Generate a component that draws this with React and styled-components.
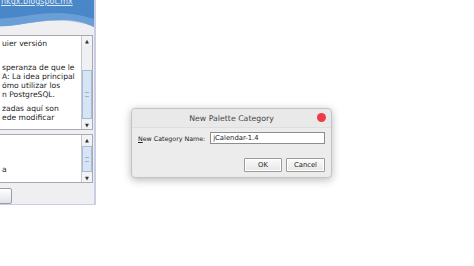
import React from "react";
import styled, { createGlobalStyle } from "styled-components";

const Global = createGlobalStyle`
  html, body { margin: 0; padding: 0; background: #ffffff; }
  body { width: 474px; height: 266px; overflow: hidden; font-family: "DejaVu Sans", sans-serif; }
`;

const Desktop = styled.div`
  position: relative;
  width: 474px;
  height: 266px;
  background: #ffffff;
  overflow: hidden;
`;

const AboutWindow = styled.div`
  position: absolute;
  left: -40px;
  top: -6px;
  width: 133px;
  height: 209px;
  background: #efeff1;
  border: 1px solid #c9cde6;
  border-right: 2px solid #c9cde6;
  display: flex;
  flex-direction: column;
`;

const Header = styled.div`
  height: 43px;
  position: relative;
  background: #efeff1;
  overflow: hidden;
  svg { display: block; }
`;

const Link = styled.span`
  position: absolute;
  left: 40px;
  top: 2px;
  font-size: 8px;
  color: #dfe9f7;
  text-decoration: underline;
  white-space: nowrap;
`;

const Body = styled.div`
  display: flex;
  flex-direction: column;
  gap: 4px;
  padding: 0;
`;

const ScrollBox = styled.div`
  height: ${p => p.h}px;
  display: flex;
  background: #ffffff;
  border: 1px solid #a9a9b0;
  margin-right: 1px;
`;

const TextArea = styled.div`
  flex: 1;
  padding: 3px 0 0 40px;
  font-size: 7.6px;
  line-height: 9px;
  color: #222;
  overflow: hidden;
`;

const Para = styled.div`
  margin-top: ${p => p.gap || 0}px;
  white-space: pre;
`;

const ScrollBar = styled.div`
  width: 10px;
  border-left: 1px solid #c6c8cf;
  background: #eef0f4;
  display: flex;
  flex-direction: column;
`;

const Arrow = styled.div`
  height: 9px;
  display: flex;
  align-items: center;
  justify-content: center;
  font-size: 5px;
  color: #333;
  background: #f2f3f6;
`;

const Track = styled.div`
  flex: 1;
  display: flex;
  flex-direction: column;
  padding-top: ${p => p.offset}px;
  padding-bottom: 1px;
`;

const Thumb = styled.div`
  flex: 1;
  background: #d7e4f4;
  border: 1px solid #a6bbd8;
  display: flex;
  align-items: center;
  justify-content: center;
  &::after {
    content: "";
    width: 4px;
    height: 3px;
    border-top: 1px solid #9fb3cf;
    border-bottom: 1px solid #9fb3cf;
  }
`;

const ButtonRow = styled.div`
  padding: 1px 0 0 0;
`;

const OldButton = styled.div`
  width: 49px;
  height: 14px;
  border: 1px solid #9a9ca4;
  border-radius: 2px;
  background: linear-gradient(#ffffff, #dfe3ea);
`;

const Dialog = styled.div`
  position: absolute;
  left: 131px;
  top: 108px;
  width: 199px;
  height: 68px;
  background: #ececec;
  border: 1px solid #c4c4c4;
  border-radius: 4px;
  box-shadow: 0 2px 8px rgba(0, 0, 0, 0.28);
  display: flex;
  flex-direction: column;
  font-family: "DejaVu Sans", sans-serif;
`;

const TitleBar = styled.div`
  height: 18px;
  position: relative;
  display: flex;
  align-items: center;
  justify-content: center;
  font-size: 7.8px;
  color: #444;
  border-bottom: 1px solid #dedede;
  background: #e9e9e9;
  border-radius: 4px 4px 0 0;
`;

const CloseDot = styled.div`
  position: absolute;
  right: 5px;
  top: 4px;
  width: 9px;
  height: 9px;
  border-radius: 50%;
  background: #ee3c46;
`;

const Content = styled.div`
  flex: 1;
  display: flex;
  flex-direction: column;
  padding: 4px 6px 5px 6px;
`;

const FieldRow = styled.div`
  display: flex;
  align-items: center;
  gap: 5px;
  font-size: 6.3px;
  color: #222;
`;

const Label = styled.span`
  white-space: nowrap;
  u { text-decoration: underline; }
`;

const Input = styled.div`
  flex: 1;
  height: 10px;
  border: 1px solid #8e8e8e;
  background: #fff;
  font-size: 6.8px;
  line-height: 10px;
  padding-left: 2px;
  color: #222;
  white-space: nowrap;
`;

const Actions = styled.div`
  margin-top: auto;
  display: flex;
  justify-content: flex-end;
  gap: 4px;
`;

const Button = styled.button`
  width: ${p => p.w}px;
  height: 14px;
  padding: 0;
  font-family: "DejaVu Sans", sans-serif;
  font-size: 6.8px;
  color: #222;
  background: linear-gradient(#fbfbfb, #e6e6e6);
  border: 1px solid #9b9b9b;
  border-radius: 1px;
  box-shadow: inset 0 0 0 1px #fff;
`;

export default function App() {
  return (
    <Desktop>
      <Global />
      <AboutWindow>
        <Header>
          <svg width="133" height="43" viewBox="0 0 133 43">
            <path d="M0 0 H133 V32 C110 20 80 26 55 30 C35 33 15 31 0 26 Z" fill="#4a87c8" />
            <path d="M0 20 C20 26 45 24 70 20 C95 16 115 18 133 24 V32 C110 22 80 26 55 30 C35 33 15 31 0 26 Z" fill="#7eaee0" opacity="0.6" />
          </svg>
          <Link>nkgx.blogspot.mx</Link>
        </Header>
        <Body>
          <ScrollBox h={93}>
            <TextArea>
              <Para>uier versión</Para>
              <Para gap={15}>{"speranza de que le\nA: La idea principal\nómo utilizar los\nn PostgreSQL."}</Para>
              <Para gap={5}>{"zadas aquí son\nede modificar"}</Para>
            </TextArea>
            <ScrollBar>
              <Arrow>▲</Arrow>
              <Track offset={25}><Thumb /></Track>
              <Arrow>▼</Arrow>
            </ScrollBar>
          </ScrollBox>
          <ScrollBox h={47}>
            <TextArea>
              <Para gap={27}>a</Para>
            </TextArea>
            <ScrollBar>
              <Arrow>▲</Arrow>
              <Track offset={2}><Thumb /></Track>
              <Arrow>▼</Arrow>
            </ScrollBar>
          </ScrollBox>
          <ButtonRow>
            <OldButton />
          </ButtonRow>
        </Body>
      </AboutWindow>

      <Dialog>
        <TitleBar>
          New Palette Category
          <CloseDot />
        </TitleBar>
        <Content>
          <FieldRow>
            <Label><u>N</u>ew Category Name:</Label>
            <Input>jCalendar-1.4</Input>
          </FieldRow>
          <Actions>
            <Button w={38}>OK</Button>
            <Button w={39}>Cancel</Button>
          </Actions>
        </Content>
      </Dialog>
    </Desktop>
  );
}
